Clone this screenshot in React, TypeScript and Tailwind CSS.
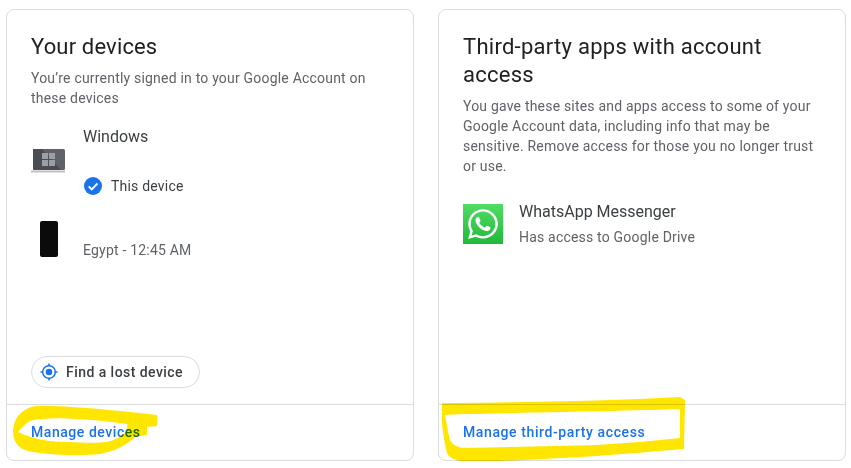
import { FaWhatsapp } from "react-icons/fa";

const font = { fontFamily: "Roboto, sans-serif" };

function LaptopIcon() {
  return (
    <svg width="36" height="26" viewBox="0 0 36 26">
      <rect x="2" y="1" width="32" height="21" rx="1.5" fill="#5f6368" />
      <path d="M2 1h9l19 21H3.500A1.500 1.500 0 0 1 2 20.500z" fill="#4a4d51" />
      <rect x="11" y="5" width="6" height="6" fill="#9aa0a6" />
      <rect x="18" y="5" width="6" height="6" fill="#9aa0a6" />
      <rect x="11" y="12" width="6" height="6" fill="#9aa0a6" />
      <rect x="18" y="12" width="6" height="6" fill="#9aa0a6" />
      <rect x="0" y="22.500" width="34" height="2" fill="#bdc1c6" />
    </svg>
  );
}

function CheckBadge() {
  return (
    <svg width="20" height="20" viewBox="0 0 20 20">
      <circle cx="10" cy="10" r="9" fill="#1a73e8" />
      <path d="M5.700 10.300l3 3 5.800-5.800" fill="none" stroke="#fff" strokeWidth="1.900" />
    </svg>
  );
}

function TargetIcon() {
  return (
    <svg width="18" height="18" viewBox="0 0 18 18">
      <circle cx="9" cy="9" r="6.300" fill="none" stroke="#1a73e8" strokeWidth="1.500" />
      <circle cx="9" cy="9" r="3.300" fill="#1a73e8" />
      <path d="M9 .5v2.500M9 15v2.500M.5 9H3M15 9h2.500" stroke="#1a73e8" strokeWidth="1.500" />
    </svg>
  );
}

export default function App() {
  return (
    <div className="flex gap-6 pl-[6px] pt-[9px] bg-white h-[468px] overflow-hidden" style={font}>
      {/* Devices card */}
      <div className="relative w-[408px] h-[452px] border border-[#dadce0] rounded-lg flex flex-col">
        <div className="flex-1 px-6 pt-[23px]">
          <h2 className="text-[22px] leading-[28px] tracking-[0.15px] text-[#202124]">Your devices</h2>
          <p className="mt-[7px] text-sm leading-5 tracking-[0.2px] text-[#5f6368]">
            You’re currently signed in to your Google Account on these devices
          </p>
          <div className="flex mt-[17px]">
            <div className="w-[52px] pt-[23px]">
              <LaptopIcon />
            </div>
            <div>
              <div className="text-base leading-6 text-[#3c4043]">Windows</div>
              <div className="flex items-center gap-2 mt-[25px] text-sm leading-6 tracking-[0.2px] text-[#3c4043]">
                <CheckBadge />
                <span>This device</span>
              </div>
            </div>
          </div>
          <div className="flex mt-[23px]">
            <div className="w-[52px] pl-[9px]">
              <div className="w-[18px] h-[36px] bg-[#0b0b0b] rounded-[2px]" />
            </div>
            <div className="pt-[19px] text-sm leading-5 tracking-[0.2px] text-[#5f6368]">Egypt - 12:45 AM</div>
          </div>
        </div>
        <div className="px-6 pb-[16px]">
          <div className="inline-flex items-center gap-2 h-8 pl-2 pr-4 border border-[#dadce0] rounded-full text-sm font-medium tracking-[0.45px] text-[#3c4043]">
            <TargetIcon />
            <span>Find a lost device</span>
          </div>
        </div>
        <div className="h-[56px] border-t border-[#dadce0] px-6 pb-[2px] flex items-center text-sm font-medium tracking-[0.55px] text-[#1a73e8]">
          Manage devices
        </div>
        <svg
          className="absolute left-[-1px] top-[392px] mix-blend-multiply pointer-events-none"
          width="170"
          height="70"
          viewBox="6 402 170 70"
        >
          <path
            fillRule="evenodd"
            fill="#ffe600"
            d="M157 415L157 426L147 427L147 435L135 437C128 443 120 450 100 454C80 456 45 455 28 451C18 448 13 442 13 430C14 418 22 408 36 406C60 405 110 410 157 415ZM18 432C33 439 50 442 67 442C85 443 100 443 107 442C115 440 122 436 126 432C127 428 128 426 127 424C105 421 85 419 67 418.500C50 418 38 419 30 421C25 424 21 428 18 432Z"
          />
        </svg>
      </div>

      {/* Third-party card */}
      <div className="relative w-[408px] h-[452px] border border-[#dadce0] rounded-lg flex flex-col">
        <div className="flex-1 px-6 pt-[23px]">
          <h2 className="text-[22px] leading-[28px] tracking-[0.27px] text-[#202124]">
            Third-party apps with account access
          </h2>
          <p className="mt-[7px] text-sm leading-5 tracking-[0.2px] text-[#5f6368]">
            You gave these sites and apps access to some of your Google Account data, including info that may be
            sensitive. Remove access for those you no longer trust or use.
          </p>
          <div className="flex mt-[24px]">
            <div className="mt-[4px] w-10 h-10 bg-gradient-to-b from-[#4fdc63] to-[#1fb93a] flex items-center justify-center text-white text-[34px]">
              <FaWhatsapp />
            </div>
            <div className="ml-4">
              <div className="text-base leading-6 text-[#3c4043]">WhatsApp Messenger</div>
              <div className="mt-[3px] text-sm leading-5 tracking-[0.2px] text-[#5f6368]">
                Has access to Google Drive
              </div>
            </div>
          </div>
        </div>
        <div className="h-[56px] border-t border-[#dadce0] px-6 pb-[2px] flex items-center text-sm font-medium tracking-[0.6px] text-[#1a73e8]">
          Manage third-party access
        </div>
        <svg
          className="absolute left-[-1px] top-[382px] mix-blend-multiply pointer-events-none"
          width="250"
          height="72"
          viewBox="438 392 250 72"
        >
          <path
            fillRule="evenodd"
            fill="#ffe600"
            d="M442 403L453 403C530 402 610 401 680 397L685 400L684 449C650 452 620 454 597 456C560 458 530 460 497 461L460 461C452 459 449 457 447 453C444 442 443 432 442 423ZM445 415C447 425 448 433 450 440C453 445 457 447 463 448C510 447 560 446 597 445C625 443 655 441 680 438L680 409C620 411 560 412 513 413C490 414 465 414 445 415Z"
          />
        </svg>
      </div>
    </div>
  );
}
